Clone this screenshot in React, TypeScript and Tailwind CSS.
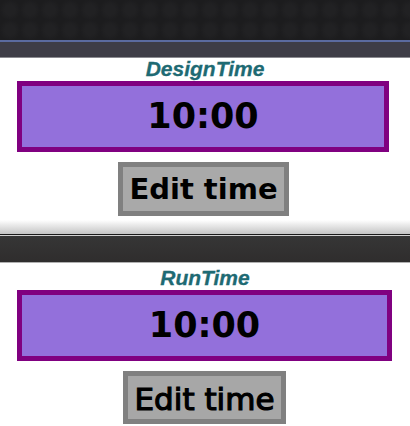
const titleCls =
  "h-[22px] text-center text-[21px] leading-[22px] font-bold italic text-[#1e6a73] font-['Liberation_Sans',Arial,sans-serif] [-webkit-text-stroke:0.3px_#1e6a73]";

function TimeBox({ width }: { width: string }) {
  return (
    <div
      className={`ml-[17px] ${width} h-[71px] border-[5px] border-[#800080] bg-[#9370db] flex items-center justify-center`}
    >
      <span className="text-[35px] leading-none font-bold text-black font-['DejaVu_Sans',Verdana,sans-serif]">
        10:00
      </span>
    </div>
  );
}

export default function App() {
  return (
    <div className="w-[410px] h-[426px] overflow-hidden bg-white">
      {/* top chrome */}
      <div className="h-[40px] bg-[#1c1c1e] bg-[radial-gradient(circle,#212123_35%,transparent_75%)] bg-[length:20px_20px]" />
      <div className="h-[2px] bg-[#5b6ba0]" />
      <div className="h-[16px] bg-[#3e3d47] border-b border-[#8a8a90]" />

      {/* design time */}
      <div className={titleCls}>DesignTime</div>
      <div className="mt-[1px]">
        <TimeBox width="w-[372px]" />
      </div>
      <button className="mt-[10px] ml-[118px] w-[171px] h-[54px] border-[5px] border-[#808080] bg-[#a9a9a9] flex items-center justify-center">
        <span className="text-[29px] leading-none font-bold text-black font-['DejaVu_Sans',Verdana,sans-serif]">
          Edit time
        </span>
      </button>

      {/* separator */}
      <div className="h-[4px]" />
      <div className="h-[14px] bg-gradient-to-b from-white to-[#c4c4c4]" />
      <div className="h-[1px] bg-[#1a1a1a]" />
      <div className="h-[1px] bg-[#d0d0d0]" />
      <div className="h-[26px] bg-gradient-to-b from-[#363636] to-[#2f2d2d]" />
      <div className="h-[1px] bg-[#b0b0b0]" />
      <div className="h-[4px]" />

      {/* run time */}
      <div className={titleCls}>RunTime</div>
      <div className="mt-[1px]">
        <TimeBox width="w-[375px]" />
      </div>
      <button className="mt-[10px] ml-[123px] w-[163px] h-[53px] border-[5px] border-[#808080] bg-[#a7a7a7] flex items-center justify-center pt-[3px]">
        <span className="text-[31px] leading-none text-black font-['DejaVu_Sans',Verdana,sans-serif] [-webkit-text-stroke:1.2px_black]">
          Edit time
        </span>
      </button>
    </div>
  );
}
